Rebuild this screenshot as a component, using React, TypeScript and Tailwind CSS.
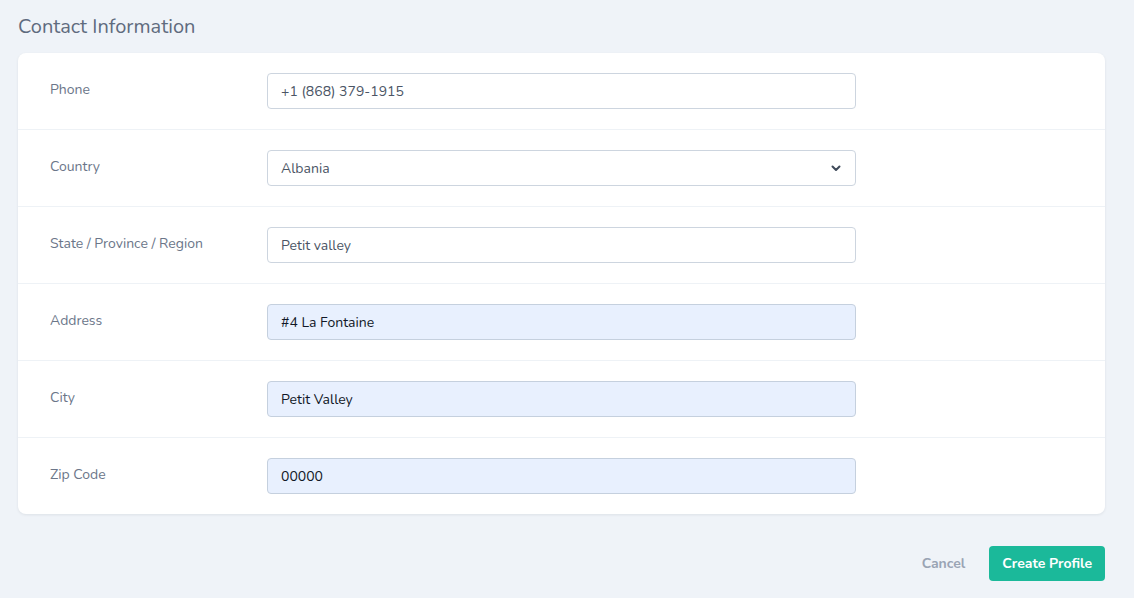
import React from 'react';

const rows = [
  { label: 'Phone', value: '+1 (868) 379-1915', filled: false },
  { label: 'Country', value: 'Albania', select: true, filled: false },
  { label: 'State / Province / Region', value: 'Petit valley', filled: false },
  { label: 'Address', value: '#4 La Fontaine', filled: true },
  { label: 'City', value: 'Petit Valley', filled: true },
  { label: 'Zip Code', value: '00000', filled: true },
];

export default function App() {
  return (
    <div
      className="min-h-screen bg-[#eff3f8] pl-[18px] pr-[29px] pt-[13px]"
      style={{ fontFamily: 'Nunito, Lato, "Noto Sans", sans-serif' }}
    >
      <h2 className="text-[20px] leading-[27px] text-[#5f6b7e] mb-[13px]">Contact Information</h2>

      <div className="bg-white rounded-lg shadow-[0_1px_3px_rgba(15,23,42,0.08)]">
        {rows.map((row, i) => (
          <div
            key={row.label}
            className={`flex items-start pt-5 pl-8 ${i < rows.length - 1 ? 'h-[77px] border-b border-[#eef2f6]' : 'h-[76px]'}`}
          >
            <div className="w-[217px] pt-[8px] text-[14px] leading-[18px] text-[#6b7689]">{row.label}</div>
            <div
              className={`w-[589px] h-[36px] rounded border flex items-center justify-between px-[13px] text-[14px] ${
                row.filled
                  ? 'bg-[#e8f0fe] border-[#c5d0de] text-[#111827]'
                  : 'bg-white border-[#cdd5df] text-[#4b5565]'
              }`}
            >
              <span>{row.value}</span>
              {row.select && (
                <svg width="12" height="12" viewBox="0 0 12 12" className="text-[#3f4a5a]">
                  <path d="M2.5 4.5 6 8l3.5-3.5" fill="none" stroke="currentColor" strokeWidth="2" strokeLinecap="round" strokeLinejoin="round" />
                </svg>
              )}
            </div>
          </div>
        ))}
      </div>

      <div className="flex justify-end items-center gap-6 mt-8">
        <button className="text-[14px] font-bold text-[#9aa4b4] px-0">Cancel</button>
        <button className="h-[35px] px-[13px] rounded bg-[#1bb99a] text-white text-[14px] font-bold">Create Profile</button>
      </div>
    </div>
  );
}
